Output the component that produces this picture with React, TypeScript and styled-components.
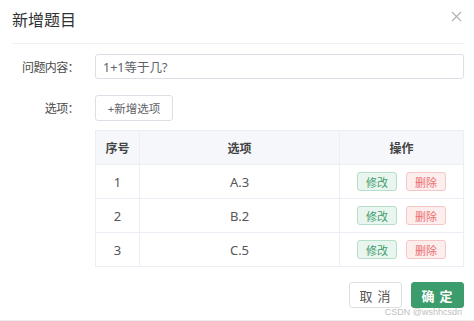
import React from "react";
import styled, { createGlobalStyle } from "styled-components";

const GlobalStyle = createGlobalStyle`
  html, body {
    margin: 0;
    padding: 0;
    background: #ffffff;
  }
  body {
    font-family: "Noto Sans", "Noto Sans CJK SC", sans-serif;
    color: #333;
  }
`;

interface OptionRow {
  id: number;
  text: string;
}

const options: OptionRow[] = [
  { id: 1, text: "A.3" },
  { id: 2, text: "B.2" },
  { id: 3, text: "C.5" },
];

const Dialog = styled.div`
  width: 474px;
  height: 321px;
  box-sizing: border-box;
  position: relative;
  border-bottom: 1px solid #ececec;
  overflow: hidden;
`;

const Header = styled.div`
  display: flex;
  align-items: center;
  justify-content: space-between;
  height: 44px;
  margin: 0 10px 0 12px;
  border-bottom: 1px solid #f0f0f0;
  box-sizing: border-box;
`;

const Title = styled.h2`
  margin: 0 0 6px 0;
  font-size: 16px;
  font-weight: 400;
  color: #303133;
  font-family: "Noto Sans CJK SC", sans-serif;
`;

const CloseButton = styled.button`
  border: none;
  background: none;
  padding: 0;
  margin: 0 2px 10px 0;
  display: flex;
  cursor: pointer;
`;

const Body = styled.div`
  padding: 10px 10px 0 0;
  display: flex;
  flex-direction: column;
`;

const FormRow = styled.div<{ $top?: number }>`
  display: flex;
  align-items: flex-start;
  margin-top: ${(p) => p.$top ?? 0}px;
`;

const Label = styled.label`
  width: 95px;
  flex: none;
  box-sizing: border-box;
  padding-right: 16px;
  text-align: right;
  font-size: 12px;
  letter-spacing: -0.6px;
  line-height: 26px;
  color: #4a4a4a;
  font-family: "Noto Sans CJK SC", sans-serif;
`;

const Field = styled.div`
  flex: 1;
  display: flex;
  flex-direction: column;
  gap: 9px;
`;

const TextInput = styled.input`
  height: 25px;
  box-sizing: border-box;
  border: 1px solid #dcdfe6;
  border-radius: 3px;
  padding: 0 7px;
  font-size: 12.5px;
  color: #606266;
  font-family: "Noto Sans", "Noto Sans CJK SC", sans-serif;
  outline: none;
`;

const PlainButton = styled.button`
  align-self: flex-start;
  width: 78px;
  height: 26px;
  padding: 0;
  box-sizing: border-box;
  border: 1px solid #dcdfe6;
  border-radius: 3px;
  background: #fff;
  font-size: 11.5px;
  color: #606266;
  font-family: "Noto Sans", "Noto Sans CJK SC", sans-serif;
`;

const Table = styled.table`
  width: 100%;
  border-collapse: collapse;
  font-size: 13px;
  color: #555;
  border: 1px solid #ebeef5;
`;

const Th = styled.th<{ $w?: number }>`
  height: 33px;
  padding: 0;
  width: ${(p) => (p.$w ? `${p.$w}px` : "auto")};
  background: #f5f7fa;
  font-weight: 700;
  font-size: 12px;
  color: #444;
  border: 1px solid #ebeef5;
  font-family: "Noto Sans CJK SC", sans-serif;
`;

const Td = styled.td`
  height: 33px;
  padding: 0;
  text-align: center;
  border: 1px solid #ebeef5;
  font-family: "Noto Sans", "Noto Sans CJK SC", sans-serif;
`;

const Actions = styled.div`
  display: flex;
  justify-content: center;
  gap: 9px;
`;

const TagButton = styled.button<{ $danger?: boolean }>`
  width: 40px;
  height: 19px;
  padding: 0;
  border-radius: 3px;
  font-size: 11px;
  font-family: "Noto Sans CJK SC", sans-serif;
  border: 1px solid ${(p) => (p.$danger ? "#f7c6c6" : "#b5dfc8")};
  background: ${(p) => (p.$danger ? "#fdeeee" : "#e9f6ef")};
  color: ${(p) => (p.$danger ? "#ec6d6d" : "#3f9d6d")};
`;

const Footer = styled.div`
  display: flex;
  justify-content: flex-end;
  gap: 9px;
  padding: 15px 10px 0 0;
`;

const FooterButton = styled.button<{ $primary?: boolean }>`
  width: 53px;
  height: 26px;
  padding: 0;
  border-radius: 3px;
  font-size: 13px;
  letter-spacing: 1px;
  font-family: "Noto Sans CJK SC", sans-serif;
  border: 1px solid ${(p) => (p.$primary ? "#3d9c6b" : "#dcdfe6")};
  background: ${(p) => (p.$primary ? "#3d9c6b" : "#fff")};
  color: ${(p) => (p.$primary ? "#fff" : "#555")};
  font-weight: ${(p) => (p.$primary ? 700 : 400)};
`;

const Watermark = styled.div`
  position: absolute;
  right: 12px;
  bottom: 3px;
  font-size: 9px;
  color: #c0c0c0;
  font-family: "Liberation Sans", sans-serif;
`;

export default function App() {
  return (
    <>
      <GlobalStyle />
      <Dialog>
        <Header>
          <Title>新增题目</Title>
          <CloseButton aria-label="关闭">
            <svg width="11" height="11" viewBox="0 0 11 11">
              <path d="M1 1 L10 10 M10 1 L1 10" stroke="#b0b0b0" strokeWidth="1.1" />
            </svg>
          </CloseButton>
        </Header>
        <Body>
          <FormRow>
            <Label>问题内容：</Label>
            <Field>
              <TextInput defaultValue="1+1等于几?" />
            </Field>
          </FormRow>
          <FormRow $top={15}>
            <Label>选项：</Label>
            <Field>
              <PlainButton>+新增选项</PlainButton>
              <Table>
                <thead>
                  <tr>
                    <Th $w={43}>序号</Th>
                    <Th $w={199}>选项</Th>
                    <Th>操作</Th>
                  </tr>
                </thead>
                <tbody>
                  {options.map((o) => (
                    <tr key={o.id}>
                      <Td>{o.id}</Td>
                      <Td>{o.text}</Td>
                      <Td>
                        <Actions>
                          <TagButton>修改</TagButton>
                          <TagButton $danger>删除</TagButton>
                        </Actions>
                      </Td>
                    </tr>
                  ))}
                </tbody>
              </Table>
            </Field>
          </FormRow>
        </Body>
        <Footer>
          <FooterButton>取 消</FooterButton>
          <FooterButton $primary>确 定</FooterButton>
        </Footer>
        <Watermark>CSDN @wshhcsdn</Watermark>
      </Dialog>
    </>
  );
}
